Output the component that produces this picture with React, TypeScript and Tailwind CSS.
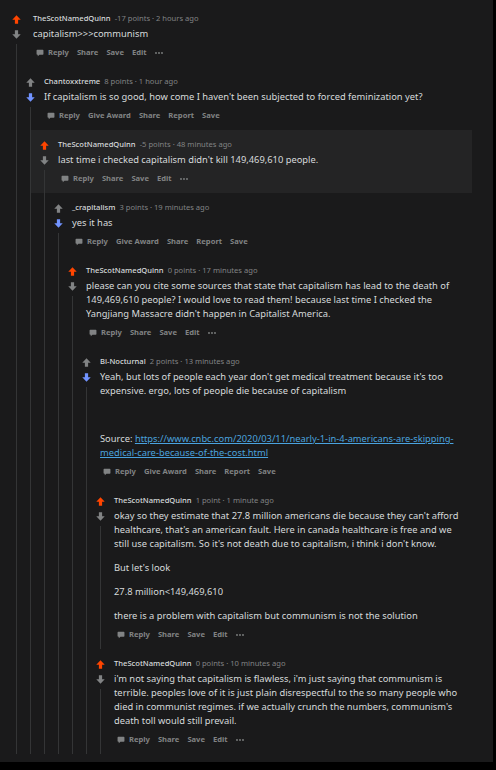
import React from 'react';

type Vote = 'up' | 'down';

interface CommentData {
  id: string;
  author: string;
  score: string;
  time: string;
  body: (React.ReactNode | null)[];
  vote: Vote;
  mine: boolean;
  highlighted?: boolean;
  replies?: CommentData[];
}

// null in body = blank paragraph
const thread: CommentData = {
  id: 'c1',
  author: 'TheScotNamedQuinn',
  score: '-17 points',
  time: '2 hours ago',
  body: ['capitalism>>>communism'],
  vote: 'up',
  mine: true,
  replies: [
    {
      id: 'c2',
      author: 'Chantoxxtreme',
      score: '8 points',
      time: '1 hour ago',
      body: ["If capitalism is so good, how come I haven't been subjected to forced feminization yet?"],
      vote: 'down',
      mine: false,
      replies: [
        {
          id: 'c3',
          author: 'TheScotNamedQuinn',
          score: '-5 points',
          time: '48 minutes ago',
          body: ["last time i checked capitalism didn't kill 149,469,610 people."],
          vote: 'up',
          mine: true,
          highlighted: true,
          replies: [
            {
              id: 'c4',
              author: '_crapitalism',
              score: '3 points',
              time: '19 minutes ago',
              body: ['yes it has'],
              vote: 'down',
              mine: false,
              replies: [
                {
                  id: 'c5',
                  author: 'TheScotNamedQuinn',
                  score: '0 points',
                  time: '17 minutes ago',
                  body: [
                    "please can you cite some sources that state that capitalism has lead to the death of 149,469,610 people? I would love to read them! because last time I checked the Yangjiang Massacre didn't happen in Capitalist America.",
                  ],
                  vote: 'up',
                  mine: true,
                  replies: [
                    {
                      id: 'c6',
                      author: 'Bi-Nocturnal',
                      score: '2 points',
                      time: '13 minutes ago',
                      body: [
                        "Yeah, but lots of people each year don't get medical treatment because it's too expensive. ergo, lots of people die because of capitalism",
                        null,
                        <>
                          Source:{' '}
                          <a className="text-[#4aa3df] underline" href="#">
                            https://www.cnbc.com/2020/03/11/nearly-1-in-4-americans-are-skipping-medical-care-because-of-the-cost.html
                          </a>
                        </>,
                      ],
                      vote: 'down',
                      mine: false,
                      replies: [
                        {
                          id: 'c7',
                          author: 'TheScotNamedQuinn',
                          score: '1 point',
                          time: '1 minute ago',
                          body: [
                            "okay so they estimate that 27.8 million americans die because they can't afford healthcare, that's an american fault. Here in canada healthcare is free and we still use capitalism. So it's not death due to capitalism, i think i don't know.",
                            "But let's look",
                            '27.8 million<149,469,610',
                            'there is a problem with capitalism but communism is not the solution',
                          ],
                          vote: 'up',
                          mine: true,
                        },
                        {
                          id: 'c8',
                          author: 'TheScotNamedQuinn',
                          score: '0 points',
                          time: '10 minutes ago',
                          body: [
                            "i'm not saying that capitalism is flawless, i'm just saying that communism is terrible. peoples love of it is just plain disrespectful to the so many people who died in communist regimes. if we actually crunch the numbers, communism's death toll would still prevail.",
                          ],
                          vote: 'up',
                          mine: true,
                        },
                      ],
                    },
                  ],
                },
              ],
            },
          ],
        },
      ],
    },
  ],
};

function Arrow({ dir, active }: { dir: Vote; active: boolean }) {
  const color = !active ? 'text-[#818384]' : dir === 'up' ? 'text-[#ff4500]' : 'text-[#7193ff]';
  return (
    <svg viewBox="0 0 10 10" className={`w-[9px] h-[9px] ${color}`} fill="currentColor">
      {dir === 'up' ? (
        <path d="M5 .4 9.7 5.4H6.8v4.2H3.2V5.4H.3z" />
      ) : (
        <path d="M5 9.6 9.7 4.6H6.8V.4H3.2v4.2H.3z" />
      )}
    </svg>
  );
}

function ReplyIcon() {
  return (
    <svg viewBox="0 0 10 10" className="w-[8px] h-[8px]" fill="currentColor">
      <path d="M1.6 1h6.8a.9.9 0 0 1 .9.9v4.5a.9.9 0 0 1-.9.9H4.3L2.2 9.1V7.3h-.6a.9.9 0 0 1-.9-.9V1.9a.9.9 0 0 1 .9-.9z" />
    </svg>
  );
}

function Dots() {
  return (
    <svg viewBox="0 0 8 2" className="w-[8px] h-[2px]" fill="currentColor">
      <circle cx="1" cy="1" r="0.9" />
      <circle cx="4" cy="1" r="0.9" />
      <circle cx="7" cy="1" r="0.9" />
    </svg>
  );
}

function Actions({ mine }: { mine: boolean }) {
  const items = mine ? ['Share', 'Save', 'Edit'] : ['Give Award', 'Share', 'Report', 'Save'];
  return (
    <div className="mt-1 h-4 flex items-center gap-[8px] pl-[3px] text-[7.6px] leading-none font-bold text-[#818384]">
      <span className="flex items-center gap-[4px]">
        <ReplyIcon />
        Reply
      </span>
      {items.map((label) => (
        <span key={label}>{label}</span>
      ))}
      {mine && <Dots />}
    </div>
  );
}

function Comment({ c, top }: { c: CommentData; top?: boolean }) {
  return (
    <div className="flex flex-col">
      <div className={`flex ${c.highlighted ? '-ml-[6px] pl-[6px] bg-[#242425]' : ''}`}>
        <div className="w-[14px] shrink-0 flex flex-col items-center pt-[7px]">
          <div className="h-4 flex items-center">
            <Arrow dir="up" active={c.vote === 'up'} />
          </div>
          <div className="h-[14px] flex items-center">
            <Arrow dir="down" active={c.vote === 'down'} />
          </div>
          <div className="flex-1 w-px mt-[3px] bg-[#343536]" />
        </div>
        <div className={`flex-1 min-w-0 pt-[7px] pb-[6px] ${top ? 'pl-[10px]' : 'pl-[7px]'}`}>
          <div className="h-4 flex items-center text-[7.6px] leading-none">
            <span className="font-medium text-[#d7dadc]">{c.author}</span>
            <span className="ml-[4px] text-[#818384]">
              {c.score} · {c.time}
            </span>
          </div>
          <div className="pr-[9px] flex flex-col gap-[10px] text-[9.33px] leading-[14px] text-[#d7dadc]">
            {c.body.map((p, i) =>
              p === null ? <div key={i} className="h-[14px]" /> : <p key={i}>{p}</p>
            )}
          </div>
          <Actions mine={c.mine} />
        </div>
      </div>
      {c.replies && (
        <div className="flex">
          <div className="w-[14px] shrink-0 flex justify-center">
            <div className="w-px bg-[#343536]" />
          </div>
          <div className="flex-1 min-w-0">
            {c.replies.map((r) => (
              <Comment key={r.id} c={r} />
            ))}
          </div>
        </div>
      )}
    </div>
  );
}

export default function App() {
  return (
    <div className="w-[496px] h-[770px] bg-black font-['Noto_Sans',sans-serif]">
      <div className="w-[493px] h-[762px] bg-[#1a1a1b] overflow-hidden pl-[9px] pt-[4px] pr-[21px]">
        <Comment c={thread} top />
      </div>
    </div>
  );
}
